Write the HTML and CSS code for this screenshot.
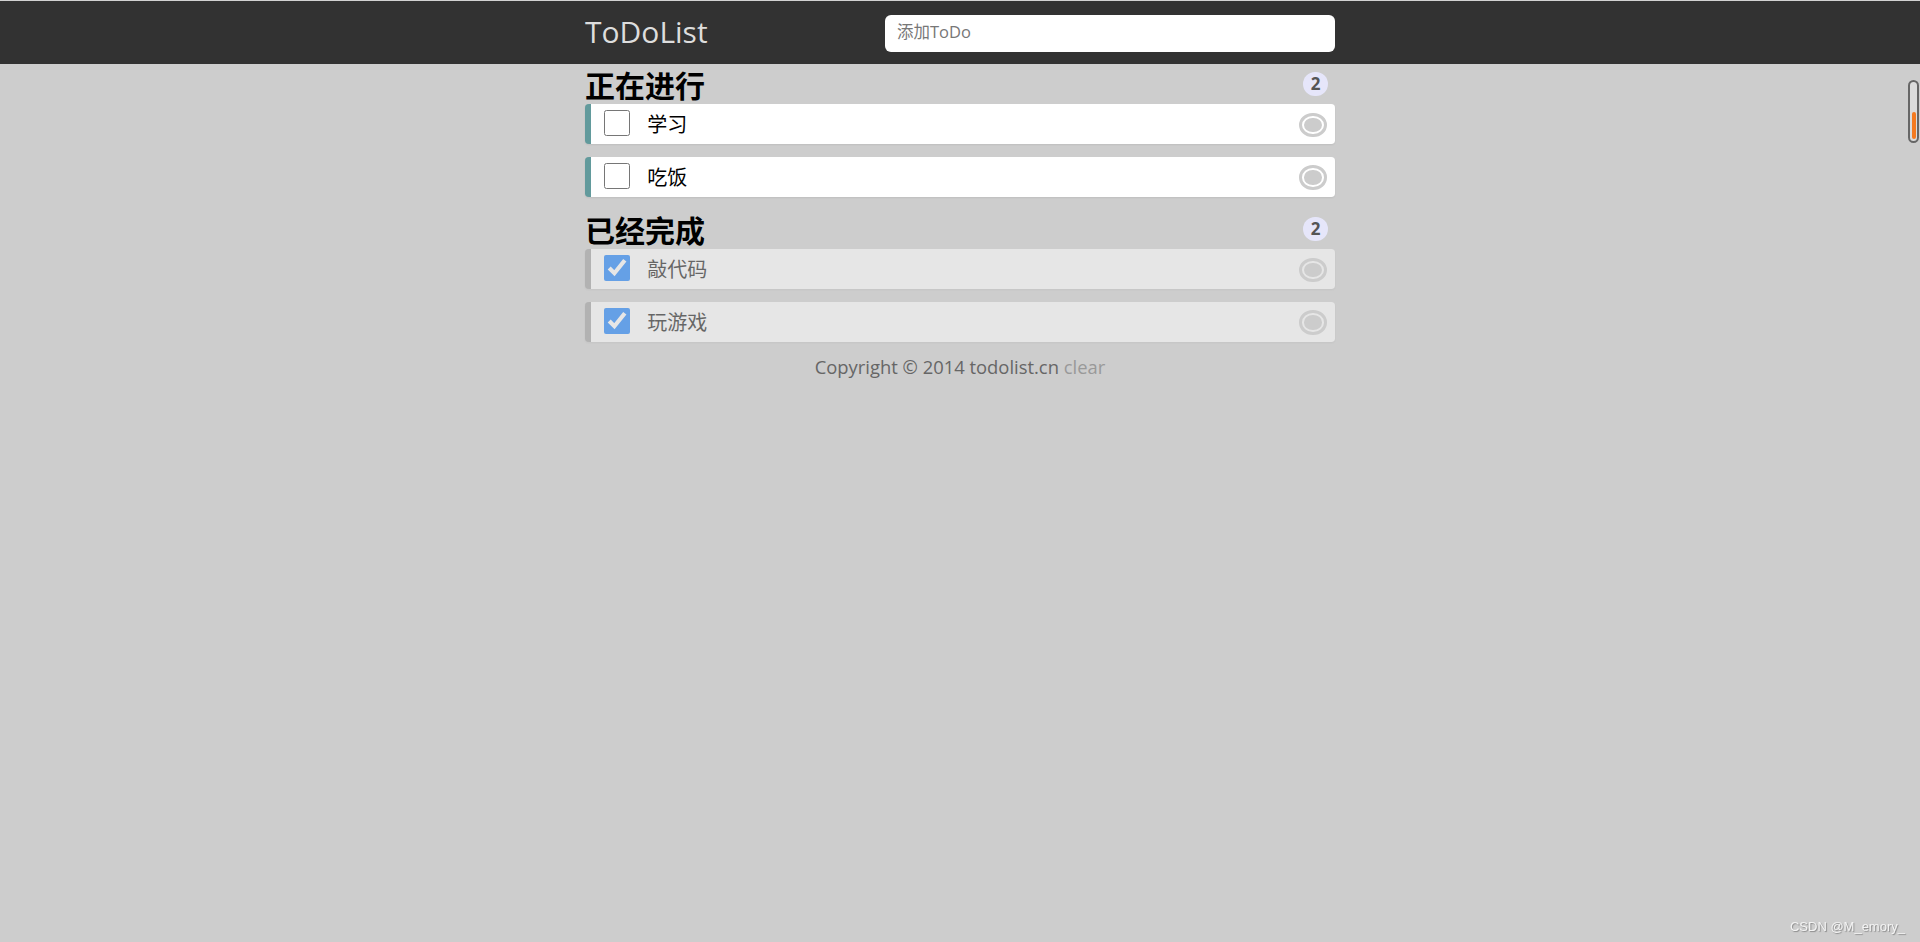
FILE: index.html
```html
<!DOCTYPE html>
<html lang="zh-CN">
<head>
<meta charset="utf-8">
<title>ToDoList</title>
<link rel="stylesheet" href="styles.css">
</head>
<body>
<header class="topbar">
  <div class="topbar-inner">
    <label class="brand" for="title">ToDoList</label>
    <input id="title" class="add-input" type="text" placeholder="添加ToDo">
  </div>
</header>
<section class="main">
  <h2 class="group-title">正在进行<span class="count">2</span></h2>
  <ol class="todo-list">
    <li class="todo-item"><input type="checkbox" class="todo-check"><p class="todo-text">学习</p><a class="todo-del" href="#"></a></li>
    <li class="todo-item"><input type="checkbox" class="todo-check"><p class="todo-text">吃饭</p><a class="todo-del" href="#"></a></li>
  </ol>
  <h2 class="group-title">已经完成<span class="count">2</span></h2>
  <ul class="todo-list">
    <li class="todo-item done"><input type="checkbox" class="todo-check" checked><p class="todo-text">敲代码</p><a class="todo-del" href="#"></a></li>
    <li class="todo-item done"><input type="checkbox" class="todo-check" checked><p class="todo-text">玩游戏</p><a class="todo-del" href="#"></a></li>
  </ul>
</section>
<footer class="footer">Copyright &copy; 2014 todolist.cn <a class="clear-link" href="#">clear</a></footer>
<div class="side-widget"><div class="side-widget-fill"></div></div>
<div class="watermark">CSDN @M_emory_</div>
</body>
</html>
```
FILE: styles.css
```css
html, body {
  margin: 0;
  padding: 0;
}
body {
  background: #cdcdcd;
  font-family: "Open Sans", "Noto Sans CJK SC", sans-serif;
  font-size: 20px;
  color: #000;
}
.topbar {
  height: 63px;
  border-top: 1px solid #d2d2d2;
  background: #323232;
}
.topbar-inner {
  width: 750px;
  height: 63px;
  margin: 0 auto;
  display: flex;
  align-items: center;
  justify-content: space-between;
}
.brand {
  font-family: "Open Sans", "Noto Sans CJK SC", sans-serif;
  font-size: 30px;
  line-height: 63px;
  color: #dddddd;
  cursor: pointer;
  margin-top: -2px;
}
.add-input {
  width: 450px;
  height: 37px;
  box-sizing: border-box;
  padding: 0 0 4px 0;
  border: none;
  border-radius: 6px;
  background: #fff;
  text-indent: 12px;
  font-family: "Open Sans", "Noto Sans CJK SC", sans-serif;
  font-size: 16.5px;
  margin-top: 1px;
}
.add-input::placeholder {
  color: #777;
}
.add-input:focus {
  outline: none;
}
.main {
  width: 750px;
  margin: 0 auto;
  padding: 0 12.5px;
}
.group-title {
  position: relative;
  margin: 0;
  height: 40px;
  line-height: 40px;
  font-size: 30px;
  font-weight: bold;
  font-family: "Noto Sans CJK SC", sans-serif;
}
.count {
  position: absolute;
  top: 7.5px;
  right: 7px;
  min-width: 25px;
  height: 24px;
  padding: 0 1px;
  box-sizing: border-box;
  border-radius: 12px;
  background: #e6e6fa;
  line-height: 24px;
  text-align: center;
  color: #555;
  font-family: "Open Sans", sans-serif;
  font-size: 17px;
  font-weight: 700;
}
.todo-list {
  margin: 0;
  padding: 0;
  list-style: none;
}
.todo-item {
  position: relative;
  height: 40px;
  line-height: 40px;
  margin-bottom: 12.5px;
  padding: 0 56.25px;
  background: #fff;
  border-radius: 3.75px;
  border-left: 6.25px solid #629a9c;
  box-shadow: 0 1px 2px rgba(0, 0, 0, 0.07);
  font-family: "Noto Sans CJK SC", sans-serif;
  font-size: 20px;
}
.todo-item.done {
  border-left-color: #999;
  opacity: 0.5;
}
.todo-check {
  position: absolute;
  top: 6px;
  left: 13px;
  width: 26px;
  height: 26px;
  margin: 0;
  cursor: pointer;
}
.todo-text {
  margin: 0;
}
.todo-del {
  position: absolute;
  top: 6.5px;
  right: 6.5px;
  width: 17.5px;
  height: 14.5px;
  border: 7.5px double #fff;
  border-radius: 50%;
  background: #ccc;
  cursor: pointer;
}
.footer {
  color: #666;
  font-size: 18.4px;
  text-align: center;
  font-family: "Open Sans", sans-serif;
}
.clear-link {
  color: #999;
  text-decoration: none;
}
.side-widget {
  position: fixed;
  top: 80px;
  right: 1px;
  width: 11px;
  height: 63px;
  box-sizing: border-box;
  border: 2px solid #666;
  border-radius: 6px;
  background: #dcdcdc;
  display: flex;
  align-items: flex-end;
  justify-content: center;
  padding-bottom: 2px;
}
.side-widget-fill {
  width: 4px;
  height: 27px;
  border-radius: 2px;
  background: #f47a20;
}
.watermark {
  position: fixed;
  right: 15px;
  bottom: 8px;
  font-family: "Liberation Sans", sans-serif;
  font-size: 13px;
  color: #f4f4f4;
  text-shadow: 1px 1px 1px #8a8a8a;
}
```
